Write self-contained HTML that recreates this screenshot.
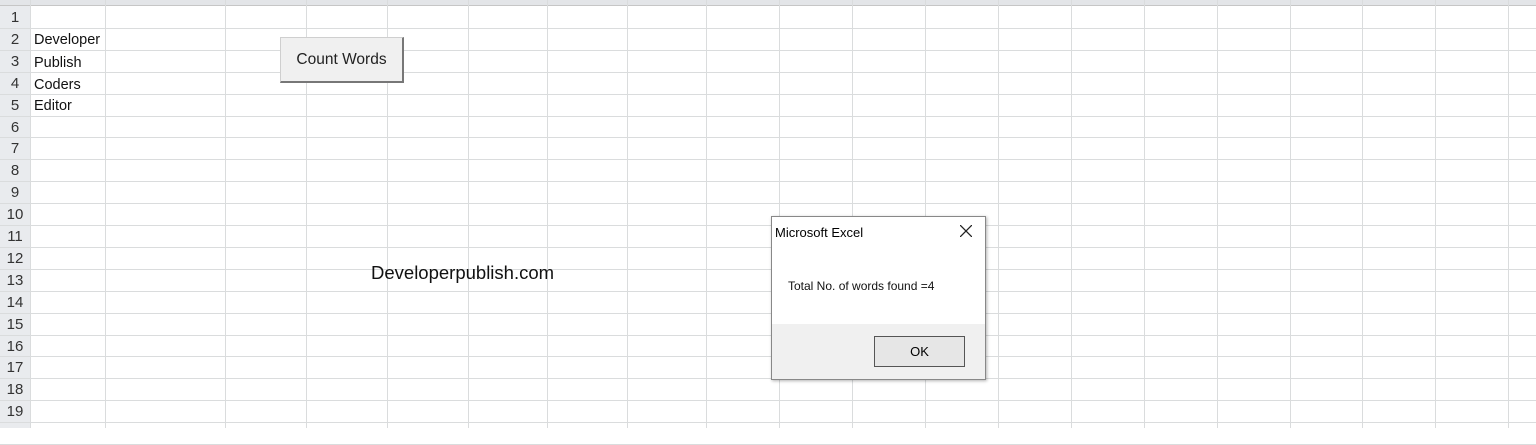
<!DOCTYPE html>
<html><head><style>
body{margin:0;width:1536px;height:428px;overflow:hidden;background:#fff;font-family:"Liberation Sans",sans-serif;position:relative}
.v{position:absolute;top:0;height:428px;width:1px;background:#dadcdd}
.h{position:absolute;left:0;width:1536px;height:1px;background:#dadcdd}
.rh{position:absolute;left:0;top:0;width:30px;height:428px;background:#e9ebee;border-right:1px solid #c6c6c6}
.top{position:absolute;left:0;top:0;width:1536px;height:5px;background:#e3e5e8;border-bottom:1px solid #c6c6c6}
.n{position:absolute;left:0;width:30px;text-align:center;font-size:15px;color:#333}
.t{position:absolute;left:34px;font-size:14.5px;color:#111}
</style></head><body>
<div class="rh"></div><div class="top"></div>
<div id="g"></div>
<div class="t" style="top:32px">Developer</div>
<div class="t" style="top:55px">Publish</div>
<div class="t" style="top:77px">Coders</div>
<div class="t" style="top:98px">Editor</div>
<div style="position:absolute;left:280px;top:37px;width:124px;height:46px;background:#f0f0f0;border:1px solid #cfcfcf;border-right:2px solid #777;border-bottom:2px solid #777;box-sizing:border-box;font-size:15.5px;text-align:center;line-height:44px;color:#222">Count Words</div>
<div style="position:absolute;left:371px;top:262px;font-size:18.5px;color:#111">Developerpublish.com</div>
<div style="position:absolute;left:771px;top:216px;width:215px;height:164px;background:#fff;border:1px solid #888;box-sizing:border-box;box-shadow:1px 1px 3px rgba(0,0,0,.3)">
 <div style="position:absolute;left:3px;top:8px;font-size:13px;color:#000">Microsoft Excel</div>
 <svg style="position:absolute;left:188px;top:8px" width="12" height="12"><path d="M0 0L12 12M12 0L0 12" stroke="#222" stroke-width="1.3"/></svg>
 <div style="position:absolute;left:16px;top:62px;font-size:12px;color:#111">Total No. of words found =4</div>
 <div style="position:absolute;left:0;top:107px;width:213px;height:55px;background:#f0f0f0"></div>
 <div style="position:absolute;left:102px;top:119px;width:91px;height:31px;border:1px solid #555;box-sizing:border-box;background:#e6e6e6;text-align:center;line-height:29px;font-size:13px">OK</div>
</div>
<script>
var g=document.getElementById('g'),s='';
[30,105,225,306,387,468,547,627,706,779,852,925,998,1071,1144,1217,1290,1362,1435,1508].forEach(function(x){s+='<div class="v" style="left:'+x+'px"></div>'});
for(var i=1;i<=20;i++){var y=Math.round(6+i*21.9);s+='<div class="h" style="top:'+y+'px"></div>';}
for(var i=1;i<=19;i++){var y=Math.round(6+(i-1)*21.9+3);s+='<div class="n" style="top:'+y+'px">'+i+'</div>';}
g.innerHTML=s;
</script>
</body></html>
